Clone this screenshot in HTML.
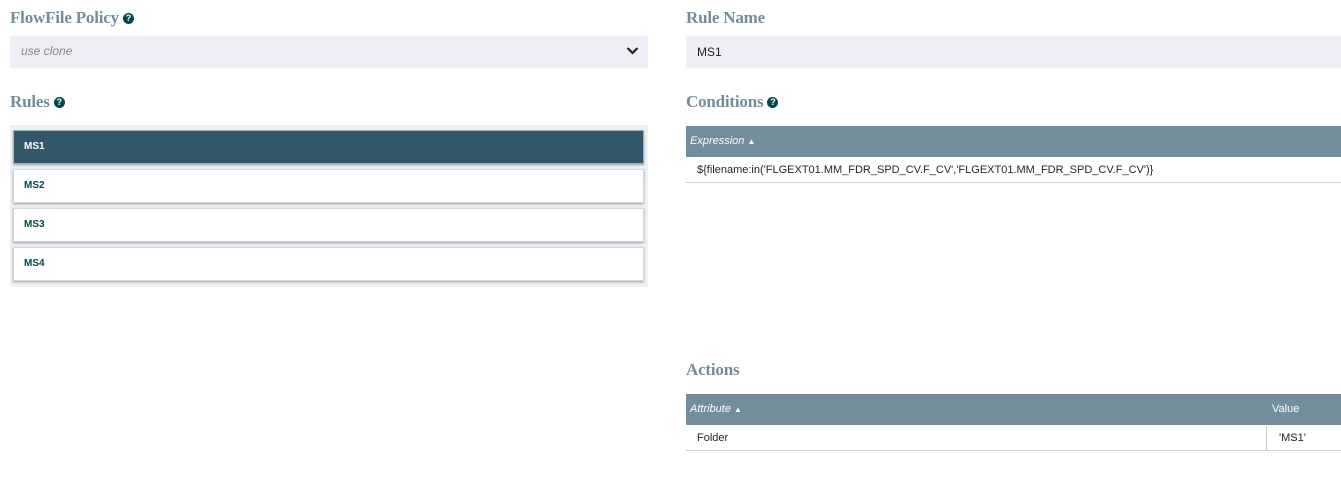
<!DOCTYPE html>
<html><head><meta charset="utf-8"><style>
body{margin:0;width:1341px;height:503px;background:#fff;font-family:"Liberation Sans",sans-serif;position:relative;overflow:hidden}
.a{position:absolute}
.h{font-family:"Liberation Serif",serif;font-weight:bold;font-size:17px;color:#728e9b;letter-spacing:-0.2px}
.q{display:inline-block;width:11px;height:11px;border-radius:50%;background:#004849;color:#fff;font-size:9px;line-height:11px;text-align:center;font-family:"Liberation Sans",sans-serif;vertical-align:2px;margin-left:4px}
.item{position:absolute;left:13px;width:619px;height:32px;background:#fff;border:1px solid #d0dbe0;box-shadow:0 1px 2px rgba(0,0,0,.35);font-size:10px;color:#004849;font-weight:bold;line-height:32px;padding-left:10px;box-sizing:content-box}
.th{background:#728e9b;color:#fff;font-size:11px;font-style:italic;height:31px;line-height:31px}
.tr{border-bottom:1px solid #c7d2d7;font-size:11px;color:#262626;height:24px;line-height:24px}
</style></head><body>
<div class="a h" style="left:10px;top:8px">FlowFile Policy<span class="q">?</span></div>
<div class="a" style="left:10px;top:36px;width:638px;height:32px;background:#eeeff6"></div>
<div class="a" style="left:21px;top:44px;font-size:12px;font-style:italic;color:#888">use clone</div>
<svg class="a" style="left:626px;top:46px" width="13" height="10" viewBox="0 0 13 10"><path d="M1.5 2 L6.5 7 L11.5 2" stroke="#222" stroke-width="2.2" fill="none"/></svg>
<div class="a h" style="left:10px;top:92px">Rules<span class="q">?</span></div>
<div class="a" style="left:10px;top:125px;width:638px;height:162px;background:#eef0f5"></div>
<div class="item" style="top:130px;background:#325769;color:#fff;border-color:#9fb4bd">MS1</div>
<div class="item" style="top:169px">MS2</div>
<div class="item" style="top:208px">MS3</div>
<div class="item" style="top:247px">MS4</div>

<div class="a h" style="left:686px;top:8px">Rule Name</div>
<div class="a" style="left:686px;top:36px;width:655px;height:32px;background:#eeeff6"></div>
<div class="a" style="left:697px;top:45px;font-size:12px;color:#262626">MS1</div>
<div class="a h" style="left:686px;top:92px">Conditions<span class="q">?</span></div>
<div class="a th" style="left:686px;top:126px;width:655px"><span style="padding-left:4px">Expression <span style="font-size:8px;font-style:normal">▲</span></span></div>
<div class="a tr" style="left:686px;top:158px;width:655px"><span style="padding-left:11px">${filename:in('FLGEXT01.MM_FDR_SPD_CV.F_CV','FLGEXT01.MM_FDR_SPD_CV.F_CV')}</span></div>
<div class="a h" style="left:686px;top:360px">Actions</div>
<div class="a th" style="left:686px;top:394px;width:655px"><span style="padding-left:4px">Attribute <span style="font-size:8px;font-style:normal">▲</span></span><span class="a" style="left:586px;font-style:normal">Value</span></div>
<div class="a tr" style="left:686px;top:426px;width:655px"><span style="padding-left:11px">Folder</span><span class="a" style="left:580px;top:0;height:24px;border-left:1px solid #c7d2d7;padding-left:12px">'MS1'</span></div>
</body></html>
